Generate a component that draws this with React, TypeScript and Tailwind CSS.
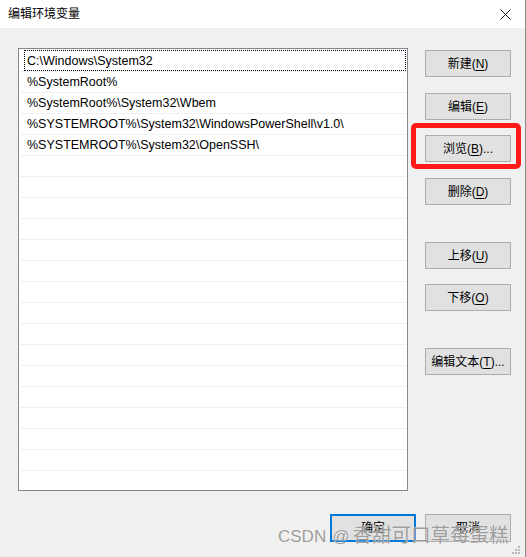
import React from 'react';

const paths = [
  'C:\\Windows\\System32',
  '%SystemRoot%',
  '%SystemRoot%\\System32\\Wbem',
  '%SYSTEMROOT%\\System32\\WindowsPowerShell\\v1.0\\',
  '%SYSTEMROOT%\\System32\\OpenSSH\\',
];

const FONT = "font-['Liberation_Sans','Noto_Sans_CJK_SC',sans-serif]";

function Btn({
  label,
  mnemonic,
  suffix = '',
  className = '',
  primary = false,
}: {
  label: string;
  mnemonic: string;
  suffix?: string;
  className?: string;
  primary?: boolean;
}) {
  return (
    <div
      className={`flex h-[27px] w-[86px] items-center justify-center bg-[#e1e1e1] text-[12px] text-black ${
        primary ? 'border-2 border-[#0078d7]' : 'border border-[#adadad]'
      } ${className}`}
    >
      <span>
        {label}
        {mnemonic && (
          <>
            (<span className="underline underline-offset-2">{mnemonic}</span>)
          </>
        )}
        {suffix}
      </span>
    </div>
  );
}

export default function App() {
  // empty rows fill the rest of the list box
  const rows = [...paths, ...Array(16).fill('')];

  return (
    <div className={`relative h-[557px] w-[526px] overflow-hidden border-r border-[#8a8a8a] bg-[#f0f0f0] ${FONT}`}>
      {/* Title bar */}
      <div className="flex h-[28px] items-center justify-between bg-white pl-[8px] pr-[10px]">
        <span className="text-[12px] text-black">编辑环境变量</span>
        <svg width="11" height="11" viewBox="0 0 11 11" className="mr-[4px]">
          <path d="M0.5 0.5 L10.5 10.5 M10.5 0.5 L0.5 10.5" stroke="#111" strokeWidth="1" />
        </svg>
      </div>

      <div className="flex pl-[18px] pt-[20px]">
        {/* List box */}
        <div className="h-[443px] w-[390px] overflow-hidden border border-[#828790] bg-white px-[1px] pt-[2px]">
          {rows.map((p, i) => (
            <div key={i} className="relative h-[21px] border-b border-[#f0f0f0] pl-[7px] text-[12.5px] leading-[21px] text-black">
              {i === 0 && (
                <div className="absolute -top-[1px] bottom-0 left-[4px] right-0 border border-dotted border-black" />
              )}
              {p}
            </div>
          ))}
        </div>

        {/* Side buttons */}
        <div className="ml-[17px] flex flex-col pt-[1px]">
          <Btn label="新建" mnemonic="N" className="mt-[1px]" />
          <Btn label="编辑" mnemonic="E" className="mt-[16px]" />
          <Btn label="浏览" mnemonic="B" suffix="..." className="mt-[15px]" />
          <Btn label="删除" mnemonic="D" className="mt-[16px]" />
          <Btn label="上移" mnemonic="U" className="mt-[37px]" />
          <Btn label="下移" mnemonic="O" className="mt-[15px]" />
          <Btn label="编辑文本" mnemonic="T" suffix="..." className="mt-[37px]" />
        </div>
      </div>

      {/* Bottom buttons */}
      <div className="mt-[23px] flex justify-end gap-[9px] pr-[14px]">
        <Btn label="确定" mnemonic="" primary className="h-[28px]" />
        <Btn label="取消" mnemonic="" className="h-[28px]" />
      </div>

      {/* Red highlight around 浏览 */}
      <div className="absolute left-[411px] top-[123px] h-[46px] w-[110px] rounded-[5px] border-[5px] border-[#ff1a1a]" />

      {/* Watermark */}
      <div className="absolute left-[278px] top-[521px] flex items-baseline whitespace-nowrap leading-[28px] text-[#8f8f8f]/90 [text-shadow:0_0_1px_#fff]">
        <span className="text-[17px]">CSDN</span>
        <span className="ml-[6px] text-[17px]">@</span>
        <span className="ml-[3px] text-[19.5px]">香甜可口草莓蛋糕</span>
      </div>

      {/* Resize grip */}
      <svg width="9" height="9" viewBox="0 0 9 9" className="absolute bottom-[2px] right-[4px]">
        <rect x="6" y="0" width="2" height="2" fill="#b8b8b8" />
        <rect x="3" y="3" width="2" height="2" fill="#b8b8b8" />
        <rect x="6" y="3" width="2" height="2" fill="#b8b8b8" />
        <rect x="0" y="6" width="2" height="2" fill="#b8b8b8" />
        <rect x="3" y="6" width="2" height="2" fill="#b8b8b8" />
        <rect x="6" y="6" width="2" height="2" fill="#b8b8b8" />
      </svg>
    </div>
  );
}
